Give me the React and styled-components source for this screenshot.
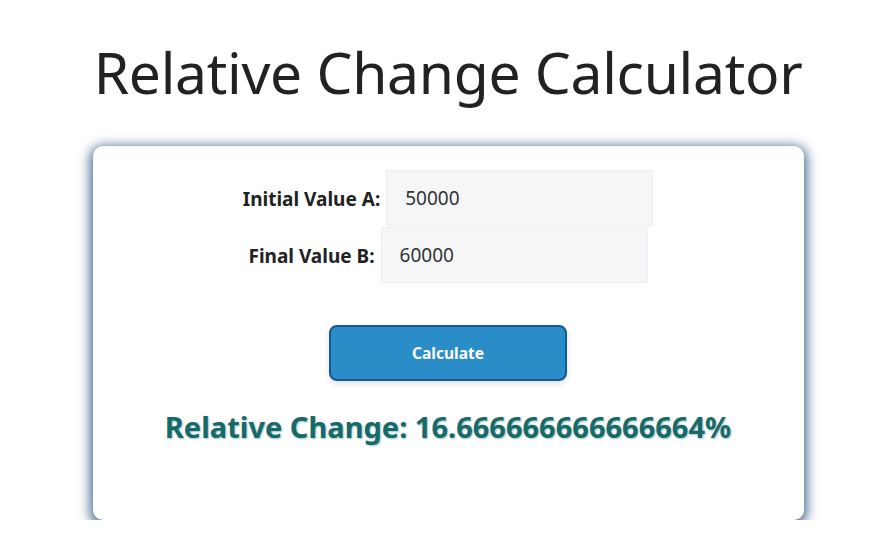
import React, { useState } from 'react'
import styled, { createGlobalStyle } from 'styled-components'

const GlobalStyle = createGlobalStyle`
    html, body {
        margin: 0;
        background: #ffffff;
    }
    body {
        font-family: "Noto Sans", "Open Sans", sans-serif;
        color: #222222;
    }
`

const Page = styled.div`
    display: flex;
    flex-direction: column;
    align-items: center;
    padding: 0 0 0 10px;
`

const Title = styled.h1`
    margin: 34px 0 36px;
    font-size: 57px;
    font-weight: 400;
    line-height: 76px;
    color: #222222;
    letter-spacing: -0.3px;
`

const Card = styled.div`
    width: 711px;
    height: 374px;
    box-sizing: border-box;
    background: #ffffff;
    border-radius: 10px;
    box-shadow: 0 3px 12px 3px rgba(45, 85, 130, 0.85);
    padding: 24px 0 0;
    display: flex;
    flex-direction: column;
    align-items: center;
`

const Row = styled.div`
    display: flex;
    align-items: center;
    gap: 6px;
`

const Label = styled.label`
    font-size: 19px;
    font-weight: 700;
    color: #222222;
`

const Input = styled.input`
    width: 267px;
    height: 56px;
    box-sizing: border-box;
    border: 1px solid #eceef0;
    background: #f5f6f8;
    padding: 0 18px;
    font-family: inherit;
    font-size: 19px;
    color: #333333;
    outline: none;
    margin-bottom: 1px;
`

const Button = styled.button`
    margin-top: 41px;
    width: 238px;
    height: 56px;
    background: #2a8dc8;
    border: 2px solid #14589a;
    border-radius: 8px;
    color: #ffffff;
    font-family: inherit;
    font-size: 15.5px;
    font-weight: 700;
    box-shadow: 0 3px 6px rgba(0, 0, 0, 0.12);
    cursor: pointer;
`

const Result = styled.div`
    margin-top: 26px;
    font-size: 29px;
    font-weight: 700;
    color: #176a6a;
    text-shadow: 1px 1px 2px rgba(0, 80, 80, 0.35);
`

export default function App() {
    const [a, setA] = useState('50000')
    const [b, setB] = useState('60000')
    const [result, setResult] = useState(((60000 - 50000) / 60000) * 100)

    return (<>
        <GlobalStyle />
        <Page>
            <Title>Relative Change Calculator</Title>
            <Card>
                <Row>
                    <Label>Initial Value A:</Label>
                    <Input value={a} onChange={e => setA(e.target.value)} />
                </Row>
                <Row>
                    <Label>Final Value B:</Label>
                    <Input value={b} onChange={e => setB(e.target.value)} />
                </Row>
                <Button onClick={() => setResult(((+b - +a) / +b) * 100)}>Calculate</Button>
                <Result>Relative Change: {result}%</Result>
            </Card>
        </Page>
    </>)
}
